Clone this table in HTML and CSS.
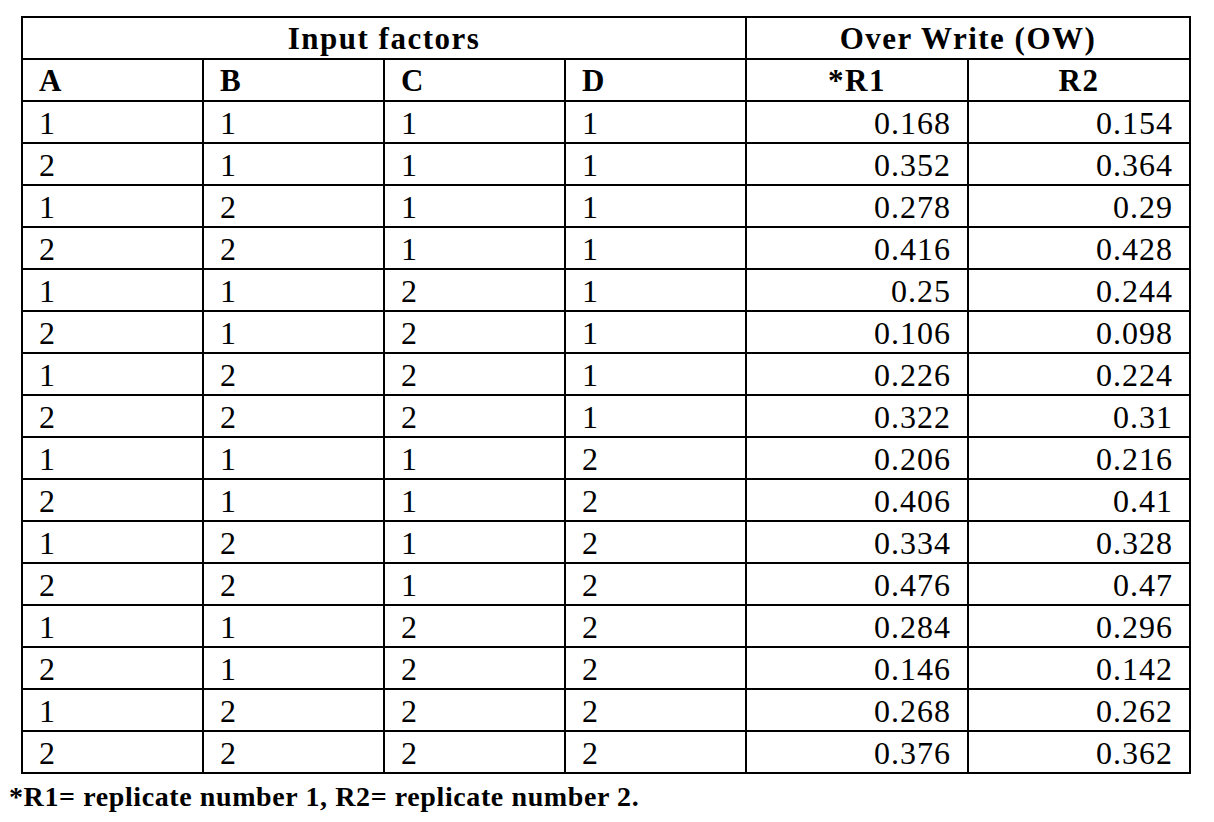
FILE: index.html
```html
<!doctype html>
<html>
<head>
  <link rel="stylesheet" href="styles.css">
</head>
<body>
  <div class="page">
    <table class="results">
      <colgroup>
        <col class="c-factor">
        <col class="c-factor">
        <col class="c-factor">
        <col class="c-factor">
        <col class="c-rep">
        <col class="c-rep">
      </colgroup>
      <tr class="head">
        <th colspan="4" class="center">Input factors</th>
        <th colspan="2" class="center">Over Write (OW)</th>
      </tr>
      <tr class="head">
        <th>A</th>
        <th>B</th>
        <th>C</th>
        <th>D</th>
        <th class="center">*R1</th>
        <th class="center">R2</th>
      </tr>
      <tr><td>1</td><td>1</td><td>1</td><td>1</td><td class="num">0.168</td><td class="num">0.154</td></tr>
      <tr><td>2</td><td>1</td><td>1</td><td>1</td><td class="num">0.352</td><td class="num">0.364</td></tr>
      <tr><td>1</td><td>2</td><td>1</td><td>1</td><td class="num">0.278</td><td class="num">0.29</td></tr>
      <tr><td>2</td><td>2</td><td>1</td><td>1</td><td class="num">0.416</td><td class="num">0.428</td></tr>
      <tr><td>1</td><td>1</td><td>2</td><td>1</td><td class="num">0.25</td><td class="num">0.244</td></tr>
      <tr><td>2</td><td>1</td><td>2</td><td>1</td><td class="num">0.106</td><td class="num">0.098</td></tr>
      <tr><td>1</td><td>2</td><td>2</td><td>1</td><td class="num">0.226</td><td class="num">0.224</td></tr>
      <tr><td>2</td><td>2</td><td>2</td><td>1</td><td class="num">0.322</td><td class="num">0.31</td></tr>
      <tr><td>1</td><td>1</td><td>1</td><td>2</td><td class="num">0.206</td><td class="num">0.216</td></tr>
      <tr><td>2</td><td>1</td><td>1</td><td>2</td><td class="num">0.406</td><td class="num">0.41</td></tr>
      <tr><td>1</td><td>2</td><td>1</td><td>2</td><td class="num">0.334</td><td class="num">0.328</td></tr>
      <tr><td>2</td><td>2</td><td>1</td><td>2</td><td class="num">0.476</td><td class="num">0.47</td></tr>
      <tr><td>1</td><td>1</td><td>2</td><td>2</td><td class="num">0.284</td><td class="num">0.296</td></tr>
      <tr><td>2</td><td>1</td><td>2</td><td>2</td><td class="num">0.146</td><td class="num">0.142</td></tr>
      <tr><td>1</td><td>2</td><td>2</td><td>2</td><td class="num">0.268</td><td class="num">0.262</td></tr>
      <tr><td>2</td><td>2</td><td>2</td><td>2</td><td class="num">0.376</td><td class="num">0.362</td></tr>
    </table>
    <p class="note">*R1= replicate number 1, R2= replicate number 2.</p>
  </div>
</body>
</html>
```

FILE: styles.css
```css
body{
  margin:0;
  background:#ffffff;
  color:#000000;
  font-family:"Liberation Serif", "Times New Roman", serif;
}
.page{
  padding:16px 0 0 21px;
}
.results{
  border-collapse:collapse;
  table-layout:fixed;
  width:1168px;
}
.c-factor{
  width:181px;
}
.c-rep{
  width:222px;
}
.results th,
.results td{
  border:2px solid #000000;
  height:38px;
  padding:2px 16px 0 16px;
  text-align:left;
  vertical-align:middle;
  font-size:32px;
  line-height:36px;
  letter-spacing:1px;
  white-space:nowrap;
}
.results th{
  font-weight:bold;
  font-size:31px;
  letter-spacing:1.5px;
}
.results .center{
  text-align:center;
}
.results .num{
  text-align:right;
}
.note{
  margin:8px 0 0 -12px;
  font-size:28px;
  font-weight:bold;
  line-height:30px;
  letter-spacing:0.6px;
}
```
